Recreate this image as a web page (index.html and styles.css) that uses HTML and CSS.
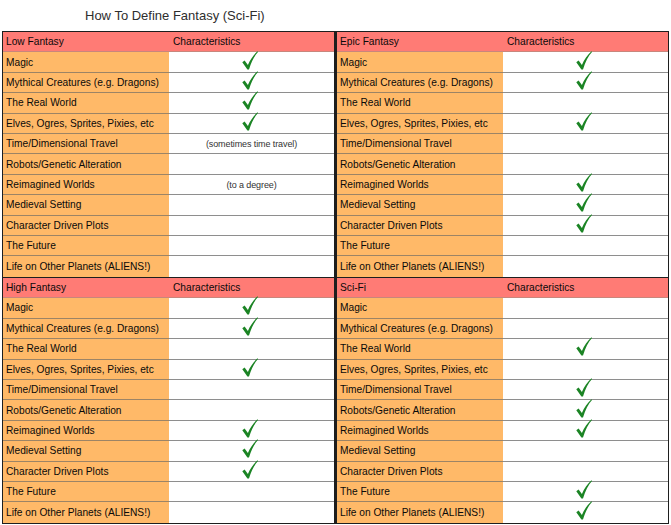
FILE: index.html
```html
<!DOCTYPE html>
<html>
<head>
<meta charset="utf-8">
<link rel="stylesheet" href="styles.css">
</head>
<body>
<svg width="0" height="0" class="defs">
  <defs>
    <symbol id="chk" viewBox="0 0 16 19">
      <path d="M0.3 11.2 L2.6 9.6 L5.9 13.9 C8.2 8.6 11.4 3.9 15.5 0.3 L16 1 C12.3 5 9.4 10.6 7 18.6 L5.4 18.6 Z" fill="#1b8424"/>
    </symbol>
  </defs>
</svg>
<div class="title">How To Define Fantasy (Sci-Fi)</div>
<div class="tables">
  <div class="tbl">
    <div class="cell hd">Low Fantasy</div><div class="cell hd hc">Characteristics</div>
    <div class="cell lb">Magic</div><div class="cell vl"><svg class="ck"><use href="#chk"/></svg></div>
    <div class="cell lb">Mythical Creatures (e.g. Dragons)</div><div class="cell vl"><svg class="ck"><use href="#chk"/></svg></div>
    <div class="cell lb">The Real World</div><div class="cell vl"><svg class="ck"><use href="#chk"/></svg></div>
    <div class="cell lb">Elves, Ogres, Sprites, Pixies, etc</div><div class="cell vl"><svg class="ck"><use href="#chk"/></svg></div>
    <div class="cell lb">Time/Dimensional Travel</div><div class="cell vl note">(sometimes time travel)</div>
    <div class="cell lb">Robots/Genetic Alteration</div><div class="cell vl"></div>
    <div class="cell lb">Reimagined Worlds</div><div class="cell vl note">(to a degree)</div>
    <div class="cell lb">Medieval Setting</div><div class="cell vl"></div>
    <div class="cell lb">Character Driven Plots</div><div class="cell vl"></div>
    <div class="cell lb">The Future</div><div class="cell vl"></div>
    <div class="cell lb last">Life on Other Planets (ALIENS!)</div><div class="cell vl last"></div>
  </div>
  <div class="tbl">
    <div class="cell hd">Epic Fantasy</div><div class="cell hd hc">Characteristics</div>
    <div class="cell lb">Magic</div><div class="cell vl"><svg class="ck"><use href="#chk"/></svg></div>
    <div class="cell lb">Mythical Creatures (e.g. Dragons)</div><div class="cell vl"><svg class="ck"><use href="#chk"/></svg></div>
    <div class="cell lb">The Real World</div><div class="cell vl"></div>
    <div class="cell lb">Elves, Ogres, Sprites, Pixies, etc</div><div class="cell vl"><svg class="ck"><use href="#chk"/></svg></div>
    <div class="cell lb">Time/Dimensional Travel</div><div class="cell vl"></div>
    <div class="cell lb">Robots/Genetic Alteration</div><div class="cell vl"></div>
    <div class="cell lb">Reimagined Worlds</div><div class="cell vl"><svg class="ck"><use href="#chk"/></svg></div>
    <div class="cell lb">Medieval Setting</div><div class="cell vl"><svg class="ck"><use href="#chk"/></svg></div>
    <div class="cell lb">Character Driven Plots</div><div class="cell vl"><svg class="ck"><use href="#chk"/></svg></div>
    <div class="cell lb">The Future</div><div class="cell vl"></div>
    <div class="cell lb last">Life on Other Planets (ALIENS!)</div><div class="cell vl last"></div>
  </div>
  <div class="tbl">
    <div class="cell hd">High Fantasy</div><div class="cell hd hc">Characteristics</div>
    <div class="cell lb">Magic</div><div class="cell vl"><svg class="ck"><use href="#chk"/></svg></div>
    <div class="cell lb">Mythical Creatures (e.g. Dragons)</div><div class="cell vl"><svg class="ck"><use href="#chk"/></svg></div>
    <div class="cell lb">The Real World</div><div class="cell vl"></div>
    <div class="cell lb">Elves, Ogres, Sprites, Pixies, etc</div><div class="cell vl"><svg class="ck"><use href="#chk"/></svg></div>
    <div class="cell lb">Time/Dimensional Travel</div><div class="cell vl"></div>
    <div class="cell lb">Robots/Genetic Alteration</div><div class="cell vl"></div>
    <div class="cell lb">Reimagined Worlds</div><div class="cell vl"><svg class="ck"><use href="#chk"/></svg></div>
    <div class="cell lb">Medieval Setting</div><div class="cell vl"><svg class="ck"><use href="#chk"/></svg></div>
    <div class="cell lb">Character Driven Plots</div><div class="cell vl"><svg class="ck"><use href="#chk"/></svg></div>
    <div class="cell lb">The Future</div><div class="cell vl"></div>
    <div class="cell lb last">Life on Other Planets (ALIENS!)</div><div class="cell vl last"></div>
  </div>
  <div class="tbl">
    <div class="cell hd">Sci-Fi</div><div class="cell hd hc">Characteristics</div>
    <div class="cell lb">Magic</div><div class="cell vl"></div>
    <div class="cell lb">Mythical Creatures (e.g. Dragons)</div><div class="cell vl"></div>
    <div class="cell lb">The Real World</div><div class="cell vl"><svg class="ck"><use href="#chk"/></svg></div>
    <div class="cell lb">Elves, Ogres, Sprites, Pixies, etc</div><div class="cell vl"></div>
    <div class="cell lb">Time/Dimensional Travel</div><div class="cell vl"><svg class="ck"><use href="#chk"/></svg></div>
    <div class="cell lb">Robots/Genetic Alteration</div><div class="cell vl"><svg class="ck"><use href="#chk"/></svg></div>
    <div class="cell lb">Reimagined Worlds</div><div class="cell vl"><svg class="ck"><use href="#chk"/></svg></div>
    <div class="cell lb">Medieval Setting</div><div class="cell vl"></div>
    <div class="cell lb">Character Driven Plots</div><div class="cell vl"></div>
    <div class="cell lb">The Future</div><div class="cell vl"><svg class="ck"><use href="#chk"/></svg></div>
    <div class="cell lb last">Life on Other Planets (ALIENS!)</div><div class="cell vl last"><svg class="ck"><use href="#chk"/></svg></div>
  </div>
</div>
</body>
</html>
```
FILE: styles.css
```css
html, body {
  margin: 0;
  padding: 0;
  background: #ffffff;
}
body {
  font-family: "Liberation Sans", Arial, sans-serif;
  color: #0a0a0a;
}
.defs {
  position: absolute;
  width: 0;
  height: 0;
}
.title {
  height: 31px;
  box-sizing: border-box;
  padding: 8px 0 0 85px;
  font-size: 13px;
  color: #2e2e2e;
  line-height: 16px;
}
.tables {
  margin-left: 2px;
  width: 667px;
  display: grid;
  grid-template-columns: 334px 333px;
}
.tbl {
  display: grid;
  grid-template-columns: 166px 1fr;
  grid-auto-rows: 20.42px;
  border: 1px solid #1e1e1e;
}
.tbl:nth-child(1), .tbl:nth-child(3) {
  border-right-width: 2px;
}
.tbl:nth-child(3), .tbl:nth-child(4) {
  border-top: none;
}
.cell {
  box-sizing: border-box;
  border-bottom: 1px solid #8e8e8e;
  font-size: 10.2px;
  display: flex;
  align-items: center;
  white-space: nowrap;
}
.cell.last {
  border-bottom: none;
}
.hd {
  background: #ff7b75;
  padding-left: 3px;
  border-bottom-color: #c8867c;
}
.hc {
  padding-left: 4px;
}
.lb {
  background: #ffb968;
  padding-left: 3px;
  border-bottom-color: #9c8466;
}
.vl {
  background: #ffffff;
  justify-content: center;
  overflow: visible;
}
.note {
  font-size: 9px;
  color: #333;
  letter-spacing: -0.1px;
}
.ck {
  width: 16px;
  height: 19px;
  transform: translate(-2px, -2px);
  overflow: visible;
}
```
